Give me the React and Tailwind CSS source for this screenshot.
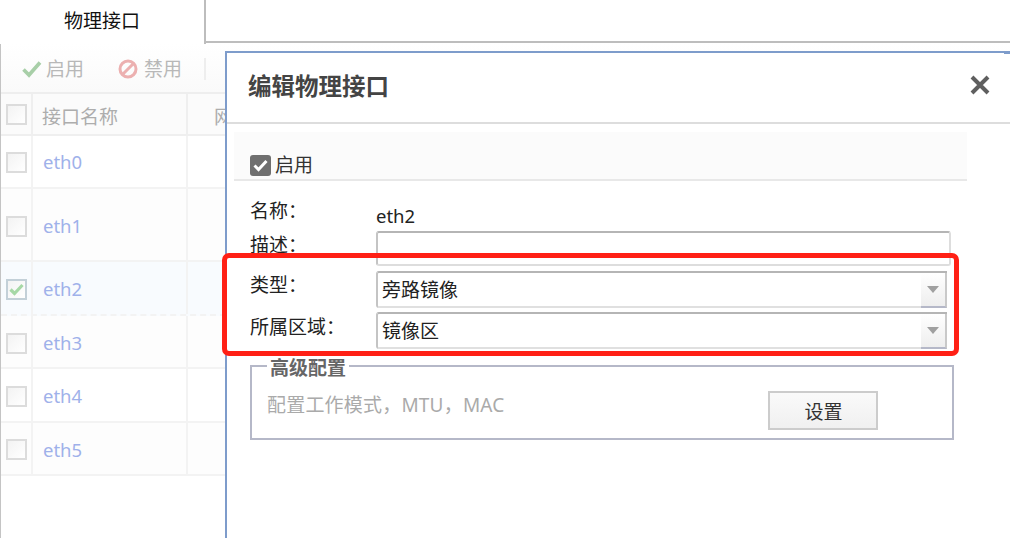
import React from "react";

const rows = [
  { name: "eth0", h: "h-[53px]", bg: "bg-white", box: "mt-[16px]", line: "border-solid", text: "pt-0" },
  { name: "eth1", h: "h-[73px]", bg: "bg-[#fdfdfd]", box: "mt-[27px]", line: "border-solid", text: "pt-[2px]" },
  { name: "eth2", h: "h-[54px]", bg: "bg-[#f8fbfe]", box: "mt-[17px]", checked: true, line: "border-dashed", text: "pt-[2px]" },
  { name: "eth3", h: "h-[53px]", bg: "bg-[#fdfdfd]", box: "mt-[17px]", line: "border-solid", text: "pt-[2px]" },
  { name: "eth4", h: "h-[54px]", bg: "bg-white", box: "mt-[17px]", line: "border-solid", text: "pt-[2px]" },
  { name: "eth5", h: "h-[53px]", bg: "bg-[#fdfdfd]", box: "mt-[16px]", line: "border-solid", text: "pt-[2px]" },
];

function Box({ checked, className = "" }) {
  return (
    <div className={`w-[21px] h-[21px] border-2 bg-gradient-to-br from-[#f3f3f3] to-white flex items-center justify-center ${checked ? "border-[#c3d0d8]" : "border-[#dcdcdc]"} ${className}`}>
      {checked && (
        <svg width="15" height="13" viewBox="0 0 15 13">
          <path d="M1.5 6.5 L5.5 10.5 L13.5 2" fill="none" stroke="#a6d8a6" strokeWidth="3.2" />
        </svg>
      )}
    </div>
  );
}

function Select({ value }) {
  return (
    <div className="w-[571px] h-[37px] flex border-t-2 border-l-2 border-t-[#b5b5b5] border-l-[#c4c4c4] rounded-tl-[3px] rounded-bl-[3px]">
      <div className="flex-1 border-b-2 border-[#e0e0e0] pl-[4px] text-[#222] leading-[34px]">{value}</div>
      <div className="w-[26px] border-r-2 border-b-2 border-r-[#c9c9c9] border-b-[#b5b8c8] bg-gradient-to-b from-white to-[#eeeeee] flex items-center justify-center">
        <svg width="12" height="7" viewBox="0 0 12 7"><path d="M0 0 H12 L6 7 Z" fill="#a0a0a0" /></svg>
      </div>
    </div>
  );
}

export default function App() {
  return (
    <div className="relative w-[1010px] h-[538px] overflow-hidden bg-white text-[19px]" style={{ fontFamily: '"Noto Sans", "Noto Sans CJK SC", sans-serif' }}>
      {/* Tabs */}
      <div className="flex h-[44px]">
        <div className="w-[206px] h-[44px] bg-white border-r-2 border-[#bdbdbd] flex justify-center pt-[6px] text-[#111] leading-[30px]">物理接口</div>
        <div className="flex-1 h-[43px] border-b-2 border-[#bdbdbd]" />
      </div>

      <div className="border-l border-[#c4c4c4] h-[494px]">
        {/* Toolbar */}
        <div className="h-[50px] border-b-2 border-[#eeeeee] bg-gradient-to-b from-white to-[#fafafa] flex items-center text-[#b8b8b8] pt-[2px]">
          <svg className="ml-[21px]" width="20" height="18" viewBox="0 0 20 18">
            <path d="M1.5 9.5 L7 15 L18 2.5" fill="none" stroke="#a8cfa8" strokeWidth="3.6" />
          </svg>
          <span className="ml-[4px] w-[40px]">启用</span>
          <svg className="ml-[32px]" width="20" height="20" viewBox="0 0 20 20">
            <circle cx="10" cy="10" r="8" fill="none" stroke="#ecb0b0" strokeWidth="3" />
            <path d="M4.5 15.5 L15.5 4.5" stroke="#ecb0b0" strokeWidth="3" />
          </svg>
          <span className="ml-[6px] w-[40px]">禁用</span>
          <div className="ml-[20px] w-[2px] h-[22px] bg-[#eeeeee]" />
        </div>

        {/* Table */}
        <div className="w-[225px]">
          <div className="flex h-[42px] border-b-2 border-[#efefef] bg-[#fbfbfb] text-[#adadad]">
            <div className="w-[32px] border-r-2 border-[#efefef] pl-[5px] pt-[10px]"><Box /></div>
            <div className="w-[155px] border-r-2 border-[#efefef] pl-[9px] leading-[46px]">接口名称</div>
            <div className="flex-1 pl-[26px] leading-[46px] overflow-hidden whitespace-nowrap">网口</div>
          </div>
          {rows.map((r) => (
            <div key={r.name} className={`flex ${r.h} ${r.bg} border-b-2 border-[#f3f3f3] ${r.line}`}>
              <div className="w-[32px] border-r-2 border-[#f3f3f3] pl-[5px]"><Box checked={r.checked} className={r.box} /></div>
              <div className={`w-[155px] border-r-2 border-[#f3f3f3] pl-[10px] flex items-center text-[#9fb1ea] text-[18.5px] ${r.text}`}>{r.name}</div>
              <div className="flex-1" />
            </div>
          ))}
        </div>
      </div>

      {/* Dialog */}
      <div className="absolute left-[225px] top-[51px] w-[785px] h-[487px] bg-white border-l-2 border-t-2 border-[#7e9ccb]">
        <div className="absolute -top-[2px] right-0 w-[6px] h-[3px] bg-[#7e9ccb]" />
        <div className="h-[71px] border-b-2 border-[#dddddd] flex items-center justify-between pl-[21px] pr-[19px]">
          <span className="text-[#444] text-[23.5px] font-bold -mt-[2px]">编辑物理接口</span>
          <svg className="-mt-[6px]" width="22" height="22" viewBox="0 0 22 22">
            <path d="M3 3 L19 19 M19 3 L3 19" stroke="#5f5f5f" strokeWidth="4" />
          </svg>
        </div>
        <div className="pl-[7px] pt-[8px]">
          <div className="w-[733px] h-[49px] bg-[#fbfbfb] border-b-2 border-[#e8e8e8] flex items-end pl-[16px] pb-[3px]">
            <div className="w-[21px] h-[21px] rounded-[3px] bg-[#6f6f6f] flex items-center justify-center">
              <svg width="15" height="13" viewBox="0 0 15 13">
                <path d="M1.5 6.5 L5.5 10.5 L13.5 2" fill="none" stroke="#fff" strokeWidth="3" />
              </svg>
            </div>
            <span className="ml-[4px] text-[#333] leading-[24px] -mb-[1px]">启用</span>
          </div>

          <div className="pl-[16px] text-[#222]">
            <div className="flex h-[50px]">
              <div className="w-[126px] pt-[17px] leading-[26px]">名称{"\uFF1A"}</div>
              <div className="pt-[22px] leading-[26px] text-[#222] text-[18.5px]">eth2</div>
            </div>
            <div className="flex h-[40px]">
              <div className="w-[126px] pt-[1px] leading-[26px]">描述{"\uFF1A"}</div>
              <div className="w-[575px] h-[35px] border-2 border-t-[#b5b5b5] border-l-[#c4c4c4] border-r-[#dddddd] border-b-[#dddddd] rounded-[3px]" />
            </div>
            <div className="flex h-[41px]">
              <div className="w-[126px] pt-[1px] leading-[26px]">类型{"\uFF1A"}</div>
              <Select value="旁路镜像" />
            </div>
            <div className="flex h-[44px]">
              <div className="w-[126px] pt-[2px] leading-[26px]">所属区域{"\uFF1A"}</div>
              <Select value="镜像区" />
            </div>
            <fieldset className="w-[704px] h-[84px] border-2 border-[#b5b8c8] pl-[15px] pr-[74px]">
              <legend className="px-[3px] text-[#666] font-bold leading-[20px]"><span className="relative top-[2px]">高级配置</span></legend>
              <div className="flex justify-between items-start">
                <span className="text-[#aaaaaa] tracking-[0.2px] leading-[26px] mt-[16px]">配置工作模式{"\uFF0C"}MTU{"\uFF0C"}MAC</span>
                <button className="w-[110px] h-[39px] mt-[15px] pt-[3px] pl-[1px] border-2 border-[#cccccc] bg-gradient-to-b from-[#fafafa] to-[#f0f0f0] text-[#333]">设置</button>
              </div>
            </fieldset>
          </div>
        </div>
      </div>

      {/* Red highlight */}
      <div className="absolute left-[222px] top-[253px] w-[737px] h-[103px] border-[5px] border-[#ff2015] rounded-[7px]" />
    </div>
  );
}
